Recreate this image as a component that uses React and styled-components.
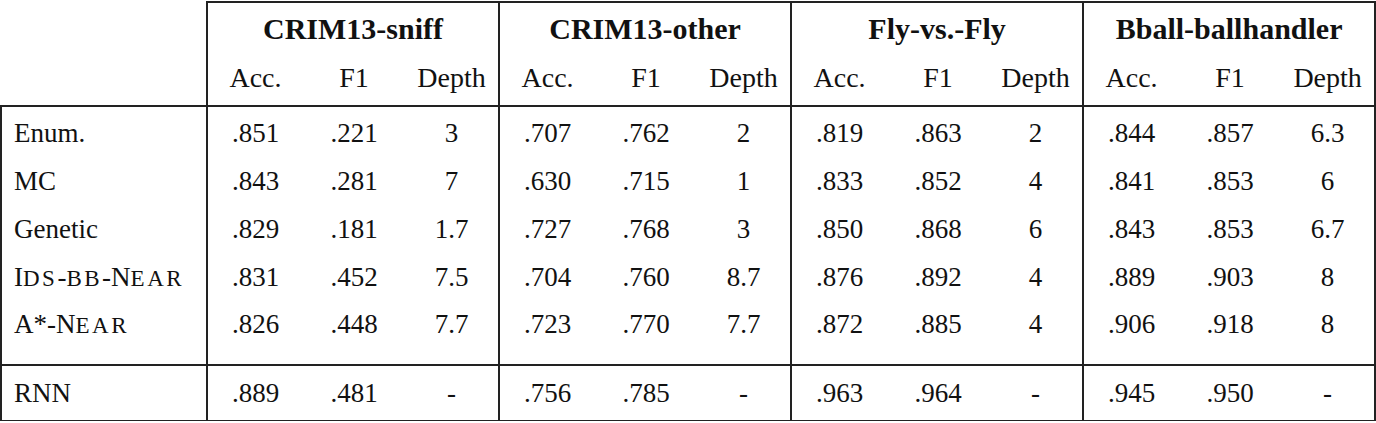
import React from "react";
import styled, { createGlobalStyle } from "styled-components";

const Global = createGlobalStyle`
  html, body { margin: 0; padding: 0; background: #fff; }
  body { padding-top: 1px; font-family: "Liberation Serif", "Times New Roman", serif; color: #111; }
`;

const Table = styled.table`
  border-collapse: collapse;
  table-layout: fixed;
  width: 1374px;
  font-family: "Liberation Serif", "Times New Roman", serif;
  font-size: 27px;
  line-height: 1;
  color: #111;
`;

const Col = styled.col`
  width: ${(p) => p.$w}px;
`;

const HeadCell = styled.th`
  box-sizing: border-box;
  font-family: "Liberation Serif", "Times New Roman", serif;
  font-weight: ${(p) => (p.$bold ? 700 : 400)};
  font-size: ${(p) => (p.$bold ? 30 : 28)}px;
  text-align: center;
  height: ${(p) => p.$h}px;
  padding: ${(p) => p.$pt || 0}px 0 ${(p) => p.$pb || 0}px 0;
  vertical-align: middle;
  border-top: ${(p) => (p.$top ? "2px solid #222" : "none")};
  border-right: ${(p) => (p.$right ? "2px solid #222" : "none")};
`;

const Row = styled.tr`
  border-top: ${(p) => (p.$ruled ? "2px solid #222" : "none")};
`;

const NameCell = styled.td`
  box-sizing: border-box;
  text-align: left;
  padding: ${(p) => p.$pt || 0}px 0 ${(p) => p.$pb || 0}px 12px;
  height: ${(p) => p.$h}px;
  border-left: 2px solid #222;
  border-right: 2px solid #222;
  white-space: nowrap;
`;

const Small = styled.span`
  font-size: 23px;
  letter-spacing: 2.5px;
`;

const Cell = styled.td`
  box-sizing: border-box;
  text-align: center;
  padding: ${(p) => p.$pt || 0}px 0 ${(p) => p.$pb || 0}px 0;
  height: ${(p) => p.$h}px;
  border-right: ${(p) => (p.$right ? "2px solid #222" : "none")};
`;

const datasets = ["CRIM13-sniff", "CRIM13-other", "Fly-vs.-Fly", "Bball-ballhandler"];

const idsName = (
  <>
    I<Small>DS</Small>-<Small>BB</Small>-N<Small>EAR</Small>
  </>
);
const astarName = (
  <>
    A*-N<Small>EAR</Small>
  </>
);

const rows = [
  { key: "enum", name: "Enum.", v: [".851", ".221", "3", ".707", ".762", "2", ".819", ".863", "2", ".844", ".857", "6.3"] },
  { key: "mc", name: "MC", v: [".843", ".281", "7", ".630", ".715", "1", ".833", ".852", "4", ".841", ".853", "6"] },
  { key: "gen", name: "Genetic", v: [".829", ".181", "1.7", ".727", ".768", "3", ".850", ".868", "6", ".843", ".853", "6.7"] },
  { key: "ids", name: idsName, v: [".831", ".452", "7.5", ".704", ".760", "8.7", ".876", ".892", "4", ".889", ".903", "8"] },
  { key: "astar", name: astarName, v: [".826", ".448", "7.7", ".723", ".770", "7.7", ".872", ".885", "4", ".906", ".918", "8"] },
];

const rnn = { name: "RNN", v: [".889", ".481", "-", ".756", ".785", "-", ".963", ".964", "-", ".945", ".950", "-"] };

const groupWidths = [96, 102, 94];

function DataCells({ values, pt, pb, h }) {
  return values.map((val, i) => (
    <Cell key={i} $right={i % 3 === 2} $pt={pt} $pb={pb} $h={h}>
      {val}
    </Cell>
  ));
}

export default function App() {
  return (
    <>
      <Global />
      <Table>
        <colgroup>
          <Col $w={206} />
          {datasets.map((d) =>
            groupWidths.map((w, i) => <Col key={d + i} $w={w} />)
          )}
        </colgroup>
        <thead>
          <tr>
            <HeadCell $h={52} $right />
            {datasets.map((d) => (
              <HeadCell key={d} colSpan={3} $bold $top $right $h={52} $pt={1}>
                {d}
              </HeadCell>
            ))}
          </tr>
          <tr>
            <HeadCell $h={52} $right />
            {datasets.map((d) =>
              ["Acc.", "F1", "Depth"].map((h, i) => (
                <HeadCell key={d + h} $right={i === 2} $h={52} $pb={3}>
                  {h}
                </HeadCell>
              ))
            )}
          </tr>
        </thead>
        <tbody>
          {rows.map((r, idx) => {
            const first = idx === 0;
            const last = idx === rows.length - 1;
            const pt = first ? 3 : 0;
            const pb = last ? 16 : 0;
            const h = 48 + pt + pb;
            return (
              <Row key={r.key} $ruled={first}>
                <NameCell $pt={pt} $pb={pb} $h={h}>
                  {r.name}
                </NameCell>
                <DataCells values={r.v} pt={pt} pb={pb} h={h} />
              </Row>
            );
          })}
          <Row $ruled>
            <NameCell $pt={1} $pb={0} $h={56}>{rnn.name}</NameCell>
            <DataCells values={rnn.v} pt={1} pb={0} h={56} />
          </Row>
          <Row $ruled />
        </tbody>
      </Table>
    </>
  );
}
